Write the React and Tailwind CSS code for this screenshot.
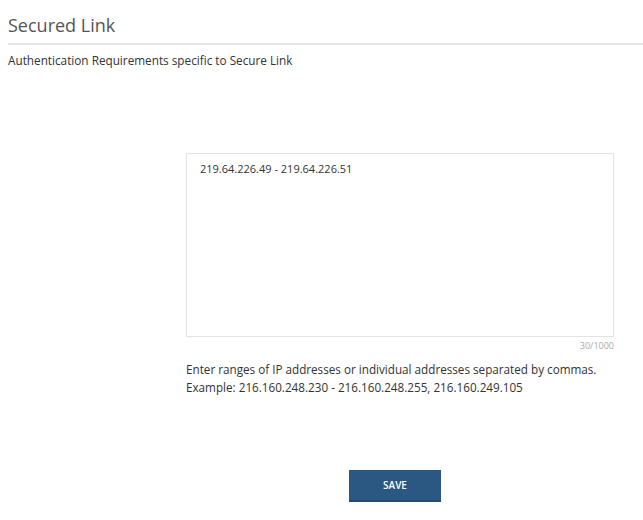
import { useState } from "react";

const App = () => {
    const [value, setValue] = useState("219.64.226.49 - 219.64.226.51");

    return (
        <div className="w-[643px] h-[520px] bg-white font-['Open_Sans',sans-serif] text-[#333]">
            <div className="pl-2 pt-[13px]">
                <h1 className="text-[18px] leading-[24px] text-[#555] font-normal">Secured Link</h1>
                <div className="mt-[6px] border-t-2 border-[#e5e5e5]" />
                <p className="mt-[6px] text-[11.75px] leading-[18px]">
                    Authentication Requirements specific to Secure Link
                </p>
            </div>

            <div className="pl-[186px] mt-[84px]">
                <div className="w-[428px]">
                    <textarea
                        value={value}
                        onChange={(e) => setValue(e.target.value)}
                        maxLength={1000}
                        className="block w-full h-[184px] resize-none border border-[#e3e3e3] px-[13px] py-[6px] text-[11px] leading-[18px] text-[#333] outline-none"
                    />
                    <p className="text-right text-[9px] leading-[14px] text-[#aaa] mt-[2px]">
                        30/1000
                    </p>
                </div>
                <p className="mt-[7px] text-[11.7px] leading-[18px]">
                    Enter ranges of IP addresses or individual addresses separated by commas.
                    <br />
                    Example: 216.160.248.230 - 216.160.248.255, 216.160.249.105
                </p>
                <button className="mt-[74px] ml-[163px] w-[92px] h-[32px] bg-[#2a5883] border-b-2 border-[#244c72] text-white text-[10px] font-semibold">
                    SAVE
                </button>
            </div>
        </div>
    );
};

export default App;
